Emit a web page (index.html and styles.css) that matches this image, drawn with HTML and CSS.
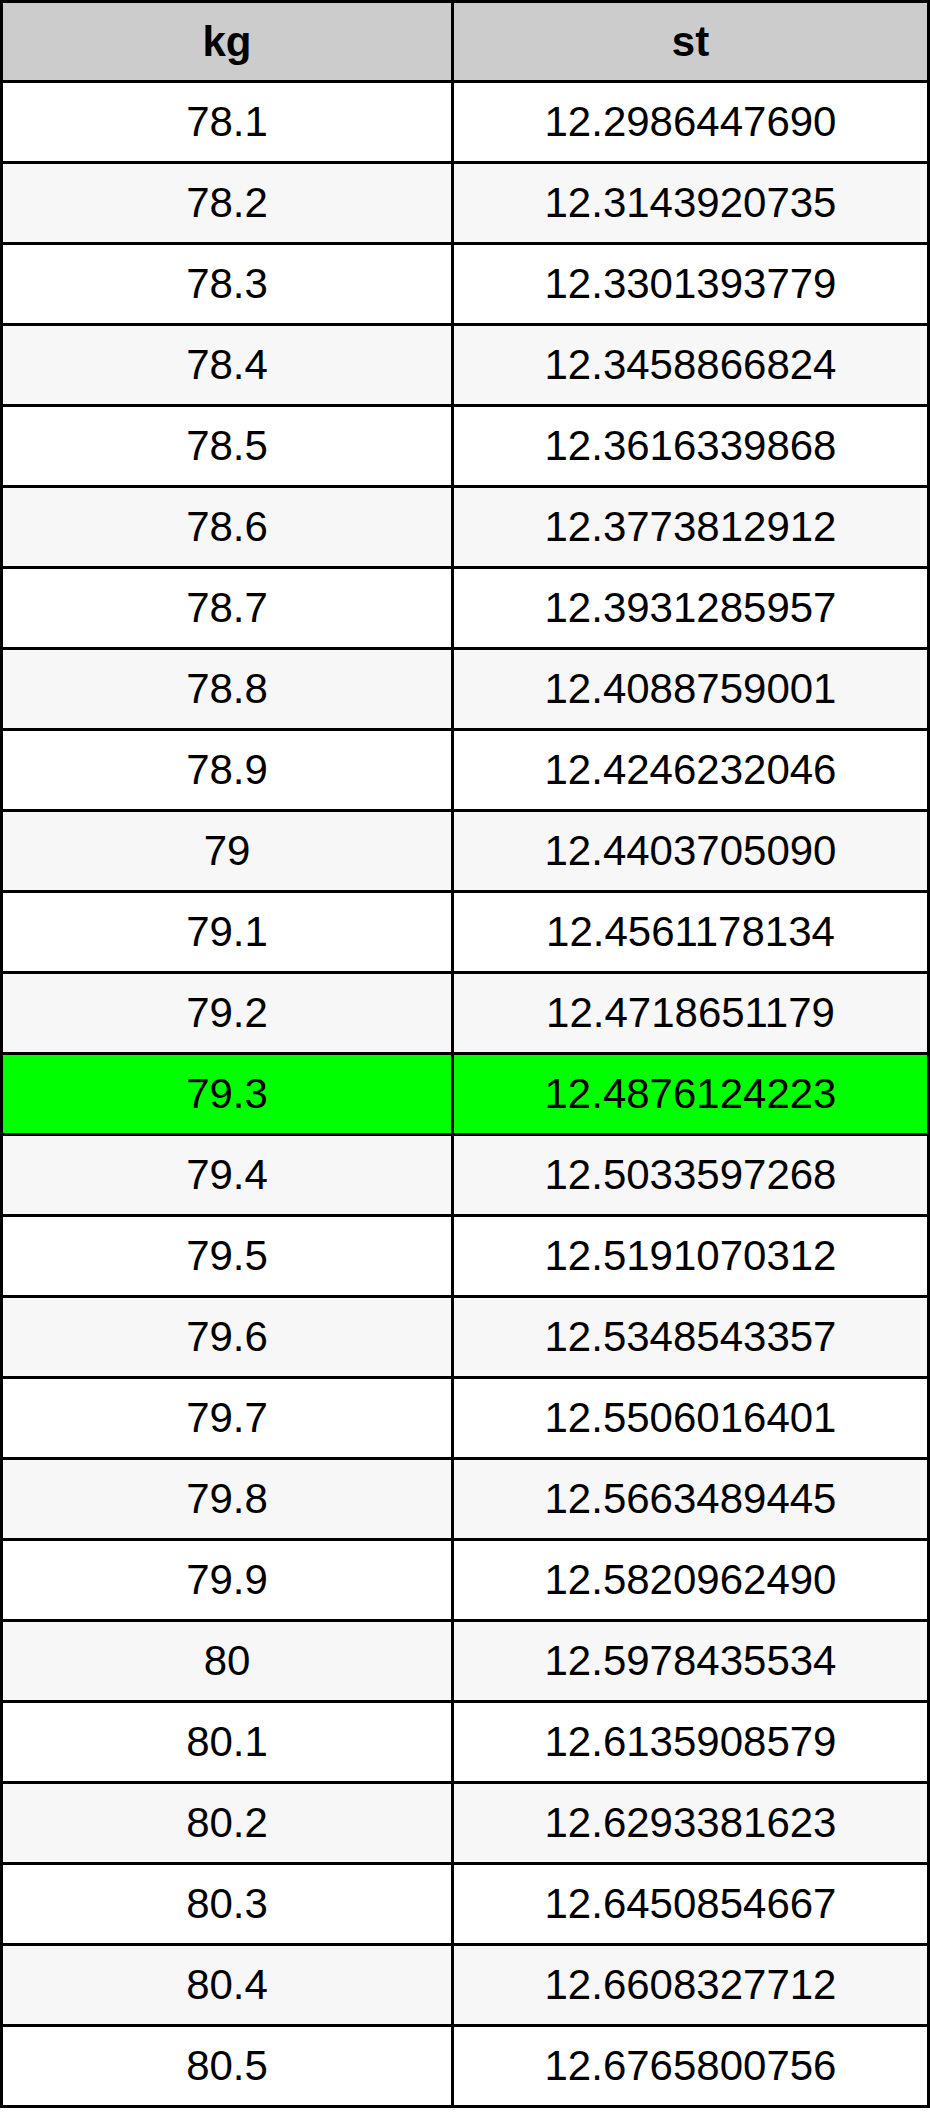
FILE: index.html
```html
<!DOCTYPE html>
<html lang="en">
<head>
<meta charset="utf-8">
<title>kg to st</title>
<link rel="stylesheet" href="styles.css">
</head>
<body>
<table class="conv">
<thead>
<tr><th class="c1">kg</th><th class="c2">st</th></tr>
</thead>
<tbody>
<tr><td>78.1</td><td>12.2986447690</td></tr>
<tr><td>78.2</td><td>12.3143920735</td></tr>
<tr><td>78.3</td><td>12.3301393779</td></tr>
<tr><td>78.4</td><td>12.3458866824</td></tr>
<tr><td>78.5</td><td>12.3616339868</td></tr>
<tr><td>78.6</td><td>12.3773812912</td></tr>
<tr><td>78.7</td><td>12.3931285957</td></tr>
<tr><td>78.8</td><td>12.4088759001</td></tr>
<tr><td>78.9</td><td>12.4246232046</td></tr>
<tr><td>79</td><td>12.4403705090</td></tr>
<tr><td>79.1</td><td>12.4561178134</td></tr>
<tr><td>79.2</td><td>12.4718651179</td></tr>
<tr class="hl"><td>79.3</td><td>12.4876124223</td></tr>
<tr><td>79.4</td><td>12.5033597268</td></tr>
<tr><td>79.5</td><td>12.5191070312</td></tr>
<tr><td>79.6</td><td>12.5348543357</td></tr>
<tr><td>79.7</td><td>12.5506016401</td></tr>
<tr><td>79.8</td><td>12.5663489445</td></tr>
<tr><td>79.9</td><td>12.5820962490</td></tr>
<tr><td>80</td><td>12.5978435534</td></tr>
<tr><td>80.1</td><td>12.6135908579</td></tr>
<tr><td>80.2</td><td>12.6293381623</td></tr>
<tr><td>80.3</td><td>12.6450854667</td></tr>
<tr><td>80.4</td><td>12.6608327712</td></tr>
<tr><td>80.5</td><td>12.6765800756</td></tr>
</tbody>
</table>
</body>
</html>
```
FILE: styles.css
```css
html, body {
  margin: 0;
  padding: 0;
  background: #ffffff;
}

.conv {
  width: 930px;
  border-collapse: separate;
  border-spacing: 0;
  border-top: 3px solid #000;
  border-left: 3px solid #000;
  table-layout: fixed;
  font-family: "Liberation Sans", Arial, sans-serif;
  font-size: 42px;
  color: #000;
}

.conv th,
.conv td {
  border-right: 3px solid #000;
  border-bottom: 3px solid #000;
  padding: 0;
  text-align: center;
  vertical-align: middle;
  line-height: 1;
}

.conv .c1 {
  width: 448px;
}

.conv th {
  height: 77px;
  background: #cccccc;
  font-weight: bold;
}

.conv td {
  height: 78px;
  background: #ffffff;
}

.conv tbody tr:nth-child(even) td {
  background: #f7f7f7;
}

.conv tbody tr.hl td {
  background: #00ff00;
}
```
